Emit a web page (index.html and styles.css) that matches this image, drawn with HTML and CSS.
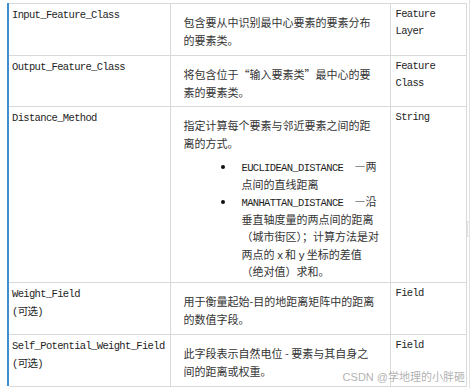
FILE: index.html
```html
<!DOCTYPE html>
<html lang="zh">
<head>
<meta charset="utf-8">
<link rel="stylesheet" href="styles.css">
</head>
<body>
<div class="page">
  <div class="quote">
    <table class="params">
      <colgroup>
        <col class="c-name">
        <col class="c-desc">
        <col class="c-type">
      </colgroup>
      <tr class="r1">
        <td class="name">Input_Feature_Class</td>
        <td class="desc"><p>包含要从中识别最中心要素的要素分布<br>的要素类。</p></td>
        <td class="type">Feature<br>Layer</td>
      </tr>
      <tr class="r2">
        <td class="name">Output_Feature_Class</td>
        <td class="desc"><p>将包含位于“输入要素类”最中心的要<br>素的要素类。</p></td>
        <td class="type">Feature<br>Class</td>
      </tr>
      <tr class="r3">
        <td class="name">Distance_Method</td>
        <td class="desc">
          <p>指定计算每个要素与邻近要素之间的距<br>离的方式。</p>
          <ul class="opts">
            <li><span><span class="mono">EUCLIDEAN_DISTANCE&nbsp;&nbsp;</span>—两<br>点间的直线距离</span></li>
            <li><span><span class="mono">MANHATTAN_DISTANCE&nbsp;&nbsp;</span>—沿<br>垂直轴度量的两点间的距离<br>（城市街区）；计算方法是对<br>两点的 <span class="mono">x</span> 和 <span class="mono">y</span> 坐标的差值<br>（绝对值）求和。</span></li>
          </ul>
        </td>
        <td class="type">String</td>
      </tr>
      <tr class="r4">
        <td class="name">Weight_Field<br>(可选)</td>
        <td class="desc"><p>用于衡量起始-目的地距离矩阵中的距离<br>的数值字段。</p></td>
        <td class="type">Field</td>
      </tr>
      <tr class="r5">
        <td class="name">Self_Potential_Weight_Field<br>(可选)</td>
        <td class="desc"><p>此字段表示自然电位 - 要素与其自身之<br>间的距离或权重。</p></td>
        <td class="type">Field</td>
      </tr>
    </table>
  </div>
  <div class="handle"></div>
  <div class="watermark">CSDN @学地理的小胖砸</div>
</div>
</body>
</html>
```

FILE: styles.css
```css
html, body {
  margin: 0;
  padding: 0;
  background: #ffffff;
}

.page {
  position: relative;
  width: 469px;
  height: 388px;
  border-right: 1px solid #e2e2e2;
  overflow: hidden;
}

.quote {
  margin: 5px 0 0 7px;
  border-left: 2px solid #3f8fcf;
  height: 383px;
}

.params {
  margin-top: -2px;
  border-collapse: collapse;
  table-layout: fixed;
  width: 457px;
  color: #1e1e1e;
}

.c-name { width: 161px; }
.c-desc { width: 220px; }
.c-type { width: 76px; }

.params td {
  border: 1px solid #d9d9d9;
  vertical-align: top;
  padding: 0;
  overflow: hidden;
}

.params tr td:first-child {
  border-left: none;
}

.r1 { height: 52px; }
.r2 { height: 51px; }
.r3 { height: 176px; }
.r4 { height: 52px; }
.r5 { height: 52px; }

.name, .type, .mono {
  font-family: "Liberation Mono", "Noto Sans CJK SC", monospace;
  font-size: 10.5px;
  letter-spacing: -0.65px;
}

.name {
  padding: 2px 0 0 3px !important;
  line-height: 18px;
}

.type {
  padding: 2px 0 0 5px !important;
  line-height: 17px;
}

.desc {
  padding: 9px 0 0 13px !important;
  font-family: "Noto Sans CJK SC", sans-serif;
  font-size: 11px;
  letter-spacing: 0;
  line-height: 18px;
  color: #333333;
}

.desc p {
  margin: 0;
  height: 36px;
}

.opts {
  list-style: none;
  margin: 6px 0 0 0;
  padding: 0 0 0 37px;
}

.opts li {
  display: flex;
  align-items: flex-start;
  line-height: 17.5px;
}

.opts li > span {
  display: block;
  line-height: 17.5px;
}

.opts .mono {
  line-height: 1;
}

.opts li::before {
  content: "";
  flex: none;
  width: 4px;
  height: 4px;
  border-radius: 50%;
  background: #111111;
  margin: 7px 17px 0 0;
}

.mono {
  color: #1e1e1e;
}

.handle {
  position: absolute;
  left: 467px;
  top: 221px;
  width: 6px;
  height: 14px;
  border: 1px solid #e4e4e4;
  border-right: none;
  background: #fafafa;
}

.handle::after {
  content: "";
  position: absolute;
  left: 2px;
  top: 6px;
  width: 4px;
  height: 1px;
  background: #9a9a9a;
}

.watermark {
  position: absolute;
  right: 4px;
  bottom: 4px;
  font-family: "Liberation Sans", "Noto Sans CJK SC", sans-serif;
  font-size: 11px;
  color: rgba(150, 150, 150, 0.75);
}
```
